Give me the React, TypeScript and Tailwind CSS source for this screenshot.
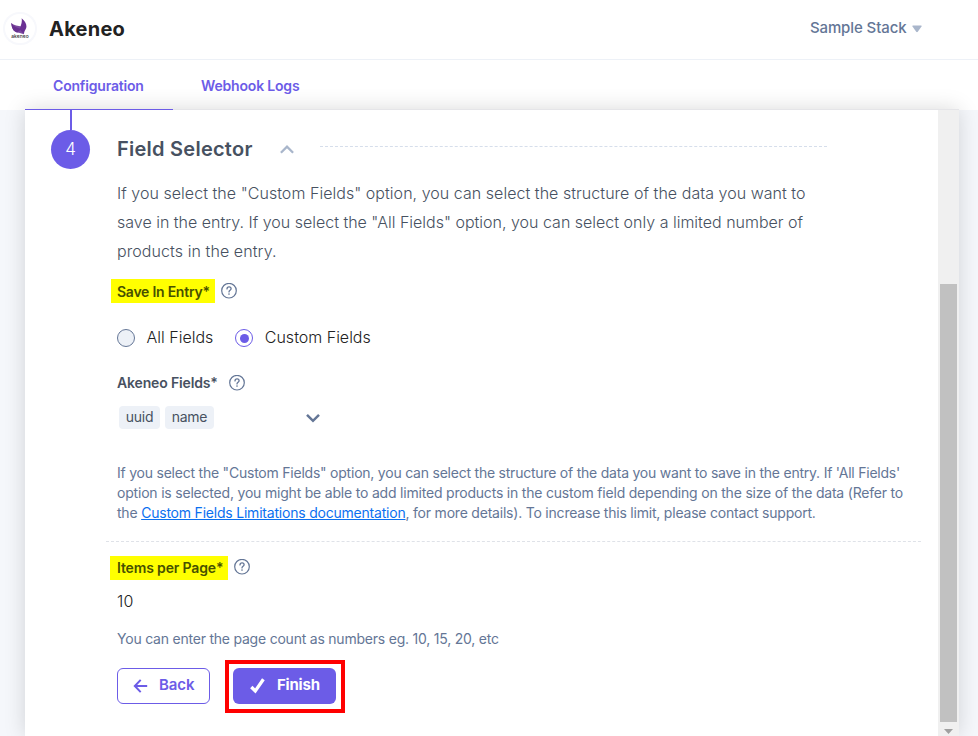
import { useState } from 'react';

const TABS = ['Configuration', 'Webhook Logs'];
const FIELDS = [
  { name: 'uuid', width: 'w-[41px]' },
  { name: 'name', width: 'w-[49px]' },
];

function HelpIcon() {
  return (
    <svg width="16" height="16" viewBox="0 0 16 16" fill="none" stroke="#647696" className="shrink-0">
      <circle cx="8" cy="7.7" r="7.3" strokeWidth="1.2" />
      <path d="M6 5.9C6 4.7 6.9 3.9 8.1 3.9S10.1 4.7 10.1 5.8C10.1 7.3 8 7.3 8 8.9" strokeWidth="1.3" strokeLinecap="round" />
      <circle cx="8" cy="11.1" r="0.8" fill="#647696" stroke="none" />
    </svg>
  );
}

function AkeneoLogo() {
  return (
    <div className="flex h-[33px] w-[34px] flex-col items-center rounded-full border-2 border-[#f7f8fc] pt-1">
      <svg width="16" height="17" viewBox="0 0 16 17" className="mr-[3px] shrink-0">
        <path d="M0.3 5C2.6 7.3 7.6 8 10.4 8.6L13 16.3C10.6 15.2 8.6 14.7 6.2 14.4C2.5 13.6 0.6 10.1 0.3 5Z" fill="#7b4a9f" />
        <path d="M10.6 0.2C14.6 3.4 16.2 7 15.1 10.2C14.4 12.2 12.8 13.5 13 16.3L8.6 11.2C9.3 8.5 11.6 4.8 10.6 0.2Z" fill="#6a3093" />
        <path d="M0.3 5C3 9 6 9.5 10.2 11.2L6.2 14.4C2.5 13.6 0.6 10.1 0.3 5Z" fill="#68308f" />
      </svg>
      <span className="-mt-[2px] text-[5px] leading-[6px] font-medium text-[#333]">akeneo</span>
    </div>
  );
}

function Radio({ label, checked, onChange }: { label: string; checked: boolean; onChange: () => void }) {
  return (
    <button className="flex items-center" onClick={onChange}>
      <span
        className={`flex size-[18px] items-center justify-center rounded-full border ${
          checked ? 'border-[#6c5ce7] bg-white' : 'border-[#647696] bg-[#edf1f7]'
        }`}
      >
        {checked && <span className="size-[9px] rounded-full bg-[#6c5ce7]" />}
      </span>
      <span className="mb-0.5 ml-[11.5px] text-[16px] font-light whitespace-nowrap text-[#222]">{label}</span>
    </button>
  );
}

export default function App() {
  const [tab, setTab] = useState('Configuration');
  const [mode, setMode] = useState('custom');

  return (
    <div className="flex h-[736px] w-[978px] flex-col overflow-hidden bg-[#f5f7fb] font-['Inter',sans-serif]">
      <header className="flex h-[60px] shrink-0 items-center border-b border-[#edf1f7] bg-white pr-[56.5px] pb-[2px] pl-[3px]">
        <AkeneoLogo />
        <h1 className="ml-3 text-[20px] font-bold tracking-[0.25px] text-[#222]">Akeneo</h1>
        <button className="ml-auto flex items-center gap-[5px] text-[15px] font-medium tracking-[-0.1px] text-[#647696]">
          Sample Stack
          <svg width="10" height="8" viewBox="0 0 10 8">
            <path d="M1 0.5H9Q10 0.5 9.5 1.6L5.8 6.7Q5 7.6 4.2 6.7L0.5 1.6Q0 0.5 1 0.5Z" fill="#a9b6cb" />
          </svg>
        </button>
      </header>

      <nav className="flex h-[50px] shrink-0 bg-white pl-[25px]">
        {TABS.map((name) => (
          <button
            key={name}
            onClick={() => setTab(name)}
            className={`relative z-10 border-b px-7 pt-px text-left text-[14px] font-semibold tracking-[-0.18px] whitespace-nowrap text-[#6c5ce7] ${
              tab === name ? 'w-[148px] border-[#6c5ce7]' : 'border-transparent'
            }`}
          >
            {name}
          </button>
        ))}
      </nav>

      <main className="-mt-px flex min-h-0 flex-1 pr-[19px] pl-[25px]">
        <div className="flex flex-1 border-t border-[#e5e5e8] bg-white shadow-[0_0_20px_rgba(0,0,0,0.15)]">
          {/* Step marker */}
          <div className="flex w-[92px] shrink-0 flex-col items-start pl-[26px]">
            <div className="ml-[19px] h-5 w-0.5 bg-[#6c5ce7]" />
            <div className="flex size-[39px] items-center justify-center rounded-full bg-[#6c5ce7] pt-px text-[17px] font-light text-white">4</div>
          </div>

          <section className="flex min-w-0 flex-1 flex-col items-start pt-[25px]">
            <div className="flex h-7 items-center">
              <h2 className="w-[163px] text-[20px] font-semibold tracking-[0.25px] text-[#475161]">Field Selector</h2>
              <svg width="14" height="9" viewBox="0 0 14 9" fill="none" stroke="#a9b6cb" strokeWidth="2.3">
                <path d="M0.9 7.8L7 1.7L13.1 7.8" />
              </svg>
              <svg width="507" height="1" className="mb-1.5 ml-[26px]">
                <path d="M0 0.5H507" stroke="#d6deeb" strokeDasharray="3 1.99" />
              </svg>
            </div>

            <p className="mt-4 text-[16px] leading-[29px] font-light whitespace-nowrap text-[#475161]">
              <span className="tracking-[0.04px]">If you select the "Custom Fields" option, you can select the structure of the data you want to</span><br />
              save in the entry. If you select the "All Fields" option, you can select only a limited number of<br />
              <span className="tracking-[0.08px]">products in the entry.</span>
            </p>

            <div className="mt-[13px] -ml-1.5 flex h-6 items-center">
              <span className="flex h-6 w-[104px] items-center bg-[#ffff00] pl-1.5 text-[14px] font-semibold tracking-[-0.25px] whitespace-nowrap text-[#475100]">
                Save In Entry*
              </span>
              <span className="ml-1.5"><HelpIcon /></span>
            </div>

            <div className="mt-[23px] flex h-6 items-center gap-[22px]">
              <Radio label="All Fields" checked={mode === 'all'} onChange={() => setMode('all')} />
              <Radio label="Custom Fields" checked={mode === 'custom'} onChange={() => setMode('custom')} />
            </div>

            <div className="mt-[22px] mb-px flex h-5 items-center">
              <span className="w-[112px] text-[14px] font-semibold tracking-[-0.15px] whitespace-nowrap text-[#475161]">Akeneo Fields*</span>
              <span className="mt-px"><HelpIcon /></span>
            </div>

            <div className="mt-[13px] ml-0.5 flex w-[201px] items-center gap-[5px]">
              {FIELDS.map((field) => (
                <span
                  key={field.name}
                  className={`h-[23px] rounded-[4px] bg-[#edf1f7] text-center text-[14px] leading-[22px] tracking-[-0.3px] text-[#475161] ${field.width}`}
                >
                  {field.name}
                </span>
              ))}
              <svg width="14" height="10" viewBox="0 0 14 10" fill="none" stroke="#647696" strokeWidth="2.5" className="ml-auto">
                <path d="M1 1.8L7 7.8L13 1.8" />
              </svg>
            </div>

            <p className="mt-[34px] text-[14px] leading-5 tracking-[-0.21px] whitespace-nowrap text-[#647696]">
              <span className="tracking-[-0.225px]">If you select the "Custom Fields" option, you can select the structure of the data you want to save in the entry. If 'All Fields'</span><br />
              <span className="tracking-[-0.2px]">option is selected, you might be able to add limited products in the custom field depending on the size of the data (Refer to</span><br />
              the <a className="text-[#0b70f0] underline" href="#limits">Custom Fields Limitations documentation</a>, for more details). To increase this limit, please contact support.
            </p>

            <svg width="816" height="1" className="mt-[18px] -ml-[11px] shrink-0">
              <path d="M0 0.5H815" stroke="#dfe2e8" strokeDasharray="3 2.012" />
            </svg>

            <div className="mt-3.5 -ml-[7px] flex h-6 items-center">
              <span className="flex h-6 w-[118px] items-center bg-[#ffff00] pb-0.5 pl-[7px] text-[14px] font-semibold tracking-[-0.15px] whitespace-nowrap text-[#475100]">
                Items per Page*
              </span>
              <span className="mb-0.5 ml-1.5"><HelpIcon /></span>
            </div>

            <div className="mt-[9px] text-[16px] leading-6 font-light tracking-[0.3px] text-[#222]">10</div>
            <p className="mt-4 text-[14px] leading-5 tracking-[-0.22px] whitespace-nowrap text-[#647696]">
              You can enter the page count as numbers eg. 10, 15, 20, etc
            </p>

            <div className="mt-[11px] flex items-start">
              <button className="mt-2 flex h-9 w-[93px] items-center rounded-[6px] border border-[#6c5ce7] pb-0.5 pl-[15px] text-[15px] font-semibold tracking-[-0.1px] text-[#6c5ce7]">
                <svg width="15" height="14" viewBox="0 0 15 14" fill="none" stroke="#6c5ce7" strokeWidth="2" className="mt-0.5 mr-[11px]">
                  <path d="M7.7 0.9L1.8 7L7.7 13.1M1.8 7H14.2" />
                </svg>
                Back
              </button>
              <div className="ml-[15px] h-[53px] w-[120px] border-4 border-[#ff0000] p-1">
                <button className="flex h-9 w-[103px] items-center rounded-[6px] bg-[#6c5ce7] pb-0.5 pl-[17px] text-[15px] font-bold tracking-[-0.2px] text-white">
                  <svg width="15" height="16" viewBox="0 0 15 16" fill="none" stroke="#fff" strokeWidth="3.3" className="mt-0.5 mr-[12px]">
                    <path d="M1.3 9L5.3 13L13.4 1.3" />
                  </svg>
                  Finish
                </button>
              </div>
            </div>
          </section>

          <div className="flex w-[21px] shrink-0 flex-col items-center bg-[#f0f0f0]">
            <div className="mt-[174px] h-[438px] w-[17px] bg-[#c1c1c1]" />
            <svg width="9" height="5" viewBox="0 0 9 5" className="mt-[7px]">
              <path d="M0 0H9L4.5 5Z" fill="#a0a0a0" />
            </svg>
          </div>
        </div>
      </main>
    </div>
  );
}
